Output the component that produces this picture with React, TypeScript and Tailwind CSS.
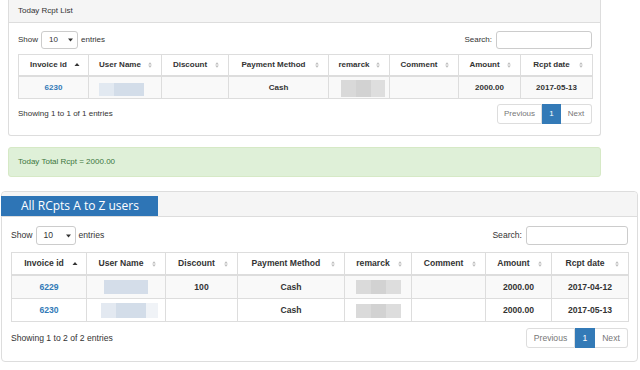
import React from "react";

const headers = ["Invoice id", "User Name", "Discount", "Payment Method", "remarck", "Comment", "Amount", "Rcpt date"];

function SortIcon({ active }: { active?: boolean }) {
  if (active)
    return (
      <svg width="6" height="8" viewBox="0 0 6 8" className="shrink-0">
        <path d="M0.5 5 L3 2 L5.5 5Z" fill="#333" />
      </svg>
    );
  return (
    <svg width="6" height="8" viewBox="0 0 6 8" className="shrink-0">
      <path d="M1.2 3.4 L3 1.2 L4.8 3.4Z M1.2 4.6 L3 6.8 L4.8 4.6Z" fill="#bdbdbd" />
    </svg>
  );
}

function HeadRow({ h }: { h: string }) {
  return (
    <tr>
      {headers.map((label, i) => (
        <th key={label} className="p-0 border border-[#ddd] border-b-2 font-bold text-[#333]">
          <div className={`${h} flex items-center pl-[4px] pr-[8px]`}>
            <span className="flex-1 text-center whitespace-nowrap">{label}</span>
            <SortIcon active={i === 0} />
          </div>
        </th>
      ))}
    </tr>
  );
}

function Cell({ children, h }: { children?: React.ReactNode; h: string }) {
  return (
    <td className="p-0 border border-[#ddd]">
      <div className={`${h} flex items-center justify-center font-bold text-[#333]`}>{children}</div>
    </td>
  );
}

function Select({ w, h }: { w: string; h: string }) {
  return (
    <div className={`${w} ${h} border border-[#ccc] rounded-[3px] flex items-center justify-between pl-[7px] pr-[4px]`}>
      <span>10</span>
      <svg width="5" height="4" viewBox="0 0 5 4">
        <path d="M0 0.5 L5 0.5 L2.5 3.5Z" fill="#333" />
      </svg>
    </div>
  );
}

function Pager({ prev, one, next, h }: { prev: string; one: string; next: string; h: string }) {
  return (
    <div className={`flex ${h}`}>
      <div className={`${prev} border border-[#ddd] rounded-l-[3px] flex items-center justify-center text-[#777]`}>Previous</div>
      <div className={`${one} bg-[#337ab7] border border-[#337ab7] flex items-center justify-center text-white`}>1</div>
      <div className={`${next} border border-[#ddd] border-l-0 rounded-r-[3px] flex items-center justify-center text-[#777]`}>Next</div>
    </div>
  );
}

export default function App() {
  return (
    <div className="w-[640px] h-[370px] bg-white overflow-hidden font-['Liberation_Sans',Arial,sans-serif] text-[#333]">
      {/* Panel 1 */}
      <div className="ml-[8px] w-[593px] border-x border-b border-[#ddd] rounded-b-[3px] text-[8px]">
        <div className="h-[23px] bg-[#f5f5f5] border-b border-[#ddd] pl-[9px] flex items-center">Today Rcpt List</div>
        <div className="pl-[9px] pr-[8px] pt-[8px] pb-[11px]">
          <div className="flex items-center justify-between h-[18px]">
            <div className="flex items-center gap-[3px]">
              <span>Show</span>
              <Select w="w-[37px]" h="h-[18px]" />
              <span>entries</span>
            </div>
            <div className="flex items-center gap-[4px]">
              <span>Search:</span>
              <div className="w-[96px] h-[18px] border border-[#ccc] rounded-[3px]" />
            </div>
          </div>
          <table className="mt-[5px] w-[574px] table-fixed">
            <colgroup>
              <col className="w-[70px]" />
              <col className="w-[73px]" />
              <col className="w-[67px]" />
              <col className="w-[100px]" />
              <col className="w-[61px]" />
              <col className="w-[69px]" />
              <col className="w-[62px]" />
              <col className="w-[72px]" />
            </colgroup>
            <thead>
              <HeadRow h="h-[20px]" />
            </thead>
            <tbody>
              <tr className="bg-[#f9f9f9]">
                <Cell h="h-[21px]">
                  <span className="text-[#337ab7]">6230</span>
                </Cell>
                <Cell h="h-[21px]">
                  <div className="flex h-[13px] w-[45px] mr-[8px] mt-[4px]">
                    <div className="w-[15px] bg-[#e2e9f1]" />
                    <div className="flex-1 bg-[#d3dde9]" />
                  </div>
                </Cell>
                <Cell h="h-[21px]" />
                <Cell h="h-[21px]">Cash</Cell>
                <Cell h="h-[21px]">
                  <div className="flex h-[17px] w-[44px] ml-[7px] mt-[2px]">
                    <div className="w-[15px] bg-[#d9d9d9]" />
                    <div className="w-[15px] bg-[#d2d2d2]" />
                    <div className="flex-1 bg-[#dedede]" />
                  </div>
                </Cell>
                <Cell h="h-[21px]" />
                <Cell h="h-[21px]">2000.00</Cell>
                <Cell h="h-[21px]">2017-05-13</Cell>
              </tr>
            </tbody>
          </table>
          <div className="mt-[5px] flex items-center justify-between">
            <span>Showing 1 to 1 of 1 entries</span>
            <Pager prev="w-[45px]" one="w-[19px]" next="w-[31px]" h="h-[20px]" />
          </div>
        </div>
      </div>

      {/* Alert */}
      <div className="mt-[11px] ml-[8px] w-[593px] h-[30px] bg-[#dff0d8] border border-[#d6e9c6] rounded-[3px] pl-[9px] flex items-center text-[8px] text-[#3c763d]">
        Today Total Rcpt = 2000.00
      </div>

      {/* Panel 2 */}
      <div className="mt-[14px] ml-[1px] w-[637px] border border-[#ddd] rounded-[4px] text-[8.6px]">
        <div className="pt-[4px] bg-[#f5f5f5] border-b border-[#ddd] rounded-t-[4px]">
          <div className="-ml-[1px] w-[157px] h-[20px] bg-[#2e75b6] text-white pl-[20px] flex items-center text-[12px] font-['Open_Sans',sans-serif]">
            All RCpts A to Z users
          </div>
        </div>
        <div className="px-[9px] pt-[9px] pb-[13px]">
          <div className="flex items-center justify-between h-[19px]">
            <div className="flex items-center gap-[3px]">
              <span>Show</span>
              <Select w="w-[40px]" h="h-[19px]" />
              <span>entries</span>
            </div>
            <div className="flex items-center gap-[4px]">
              <span>Search:</span>
              <div className="w-[102px] h-[19px] border border-[#ccc] rounded-[3px]" />
            </div>
          </div>
          <table className="mt-[7px] w-[617px] table-fixed">
            <colgroup>
              <col className="w-[75px]" />
              <col className="w-[79px]" />
              <col className="w-[72px]" />
              <col className="w-[107px]" />
              <col className="w-[67px]" />
              <col className="w-[74px]" />
              <col className="w-[66px]" />
              <col className="w-[77px]" />
            </colgroup>
            <thead>
              <HeadRow h="h-[21px]" />
            </thead>
            <tbody>
              <tr className="bg-[#f9f9f9]">
                <Cell h="h-[22px]">
                  <span className="text-[#337ab7]">6229</span>
                </Cell>
                <Cell h="h-[22px]">
                  <div className="h-[14px] w-[44px] bg-[#d4dde9]" />
                </Cell>
                <Cell h="h-[22px]">100</Cell>
                <Cell h="h-[22px]">Cash</Cell>
                <Cell h="h-[22px]">
                  <div className="flex h-[14px] w-[45px]">
                    <div className="w-[15px] bg-[#dadada]" />
                    <div className="w-[15px] bg-[#d2d2d2]" />
                    <div className="flex-1 bg-[#dddddd]" />
                  </div>
                </Cell>
                <Cell h="h-[22px]" />
                <Cell h="h-[22px]">2000.00</Cell>
                <Cell h="h-[22px]">2017-04-12</Cell>
              </tr>
              <tr className="bg-white">
                <Cell h="h-[22px]">
                  <span className="text-[#337ab7]">6230</span>
                </Cell>
                <Cell h="h-[22px]">
                  <div className="flex h-[15px] w-[57px] ml-[6px]">
                    <div className="w-[15px] bg-[#e3e9f1]" />
                    <div className="w-[30px] bg-[#d3dde9]" />
                    <div className="flex-1 bg-[#f0f3f7]" />
                  </div>
                </Cell>
                <Cell h="h-[22px]" />
                <Cell h="h-[22px]">Cash</Cell>
                <Cell h="h-[22px]">
                  <div className="flex h-[14px] w-[45px] mt-[2px]">
                    <div className="w-[15px] bg-[#dadada]" />
                    <div className="w-[15px] bg-[#d2d2d2]" />
                    <div className="flex-1 bg-[#dddddd]" />
                  </div>
                </Cell>
                <Cell h="h-[22px]" />
                <Cell h="h-[22px]">2000.00</Cell>
                <Cell h="h-[22px]">2017-05-13</Cell>
              </tr>
            </tbody>
          </table>
          <div className="mt-[6px] flex items-center justify-between">
            <span>Showing 1 to 2 of 2 entries</span>
            <Pager prev="w-[49px]" one="w-[20px]" next="w-[33px]" h="h-[20px]" />
          </div>
        </div>
      </div>
    </div>
  );
}
